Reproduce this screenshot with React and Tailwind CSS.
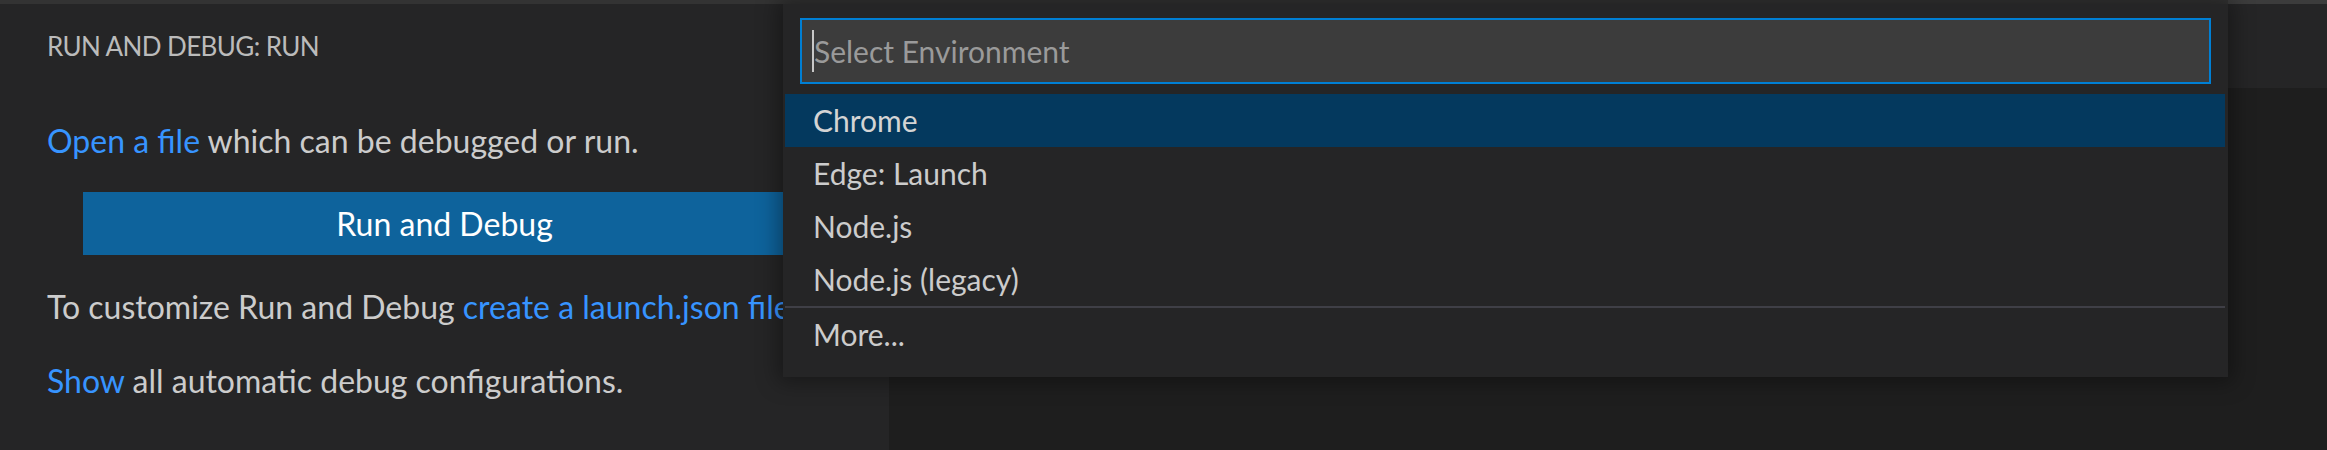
import React from "react";

const items = ["Chrome", "Edge: Launch", "Node.js", "Node.js (legacy)"];

export default function App() {
  return (
    <div className="relative w-[2327px] h-[450px] overflow-hidden bg-[#1e1e1e] font-['Lato','Noto_Sans',sans-serif] text-[#cccccc]">
      <div className="flex h-[4px]">
        <div className="w-[2228px] bg-[#333333]" />
        <div className="flex-1 bg-[#3c3c3c]" />
      </div>
      <div className="flex h-[446px]">
        <aside className="w-[889px] shrink-0 bg-[#252526] pl-[47px] pr-[47px]">
          <div className="mt-[26px] text-[26px] tracking-[-0.6px] leading-[32px] text-[#bbbbbb] whitespace-nowrap">
            RUN AND DEBUG: RUN
          </div>
          <p className="mt-[60px] text-[32px] leading-[38px] whitespace-nowrap">
            <span className="text-[#3794ff]">Open a file</span> which can be debugged or run.
          </p>
          <div className="mt-[32px] flex justify-center">
            <button className="w-[723px] h-[63px] bg-[#0e639c] text-white text-[32px] leading-[38px]">
              Run and Debug
            </button>
          </div>
          <p className="mt-[33px] text-[32px] leading-[38px] whitespace-nowrap">
            To customize Run and Debug <span className="text-[#3794ff]">create a launch.json file.</span>
          </p>
          <p className="mt-[36px] text-[32px] leading-[38px] whitespace-nowrap">
            <span className="text-[#3794ff]">Show</span> all automatic debug configurations.
          </p>
        </aside>
        <main className="flex-1 flex flex-col">
          <div className="h-[84px] bg-[#252526]" />
          <div className="flex-1 bg-[#1e1e1e]" />
        </main>
      </div>

      <div className="absolute left-[783px] top-[4px] w-[1445px] h-[373px] bg-[#252526] shadow-[0_0_20px_5px_rgba(0,0,0,0.36)]">
        <div className="mt-[14px] mx-[17px] h-[66px] border-2 border-[#007fd4] bg-[#3c3c3c] flex items-center pl-[10px]">
          <div className="w-[2px] h-[42px] bg-[#c8c8c8]" />
          <span className="text-[30px] leading-[36px] text-[#9a9a9a] whitespace-nowrap">Select Environment</span>
        </div>
        <div className="mt-[10px] ml-[2px] mr-[3px]">
          {items.map((t, i) => (
            <div
              key={t}
              className={
                i === 0
                  ? "h-[53px] flex items-center pl-[28px] bg-[#04395e] text-[30px] text-[#d4d4d4] whitespace-nowrap"
                  : "h-[53px] flex items-center pl-[28px] text-[30px] whitespace-nowrap"
              }
            >
              {t}
            </div>
          ))}
          <div className="h-[2px] bg-[#3f3f46]" />
          <div className="h-[53px] flex items-center pl-[28px] text-[30px] whitespace-nowrap">More...</div>
        </div>
      </div>
    </div>
  );
}
